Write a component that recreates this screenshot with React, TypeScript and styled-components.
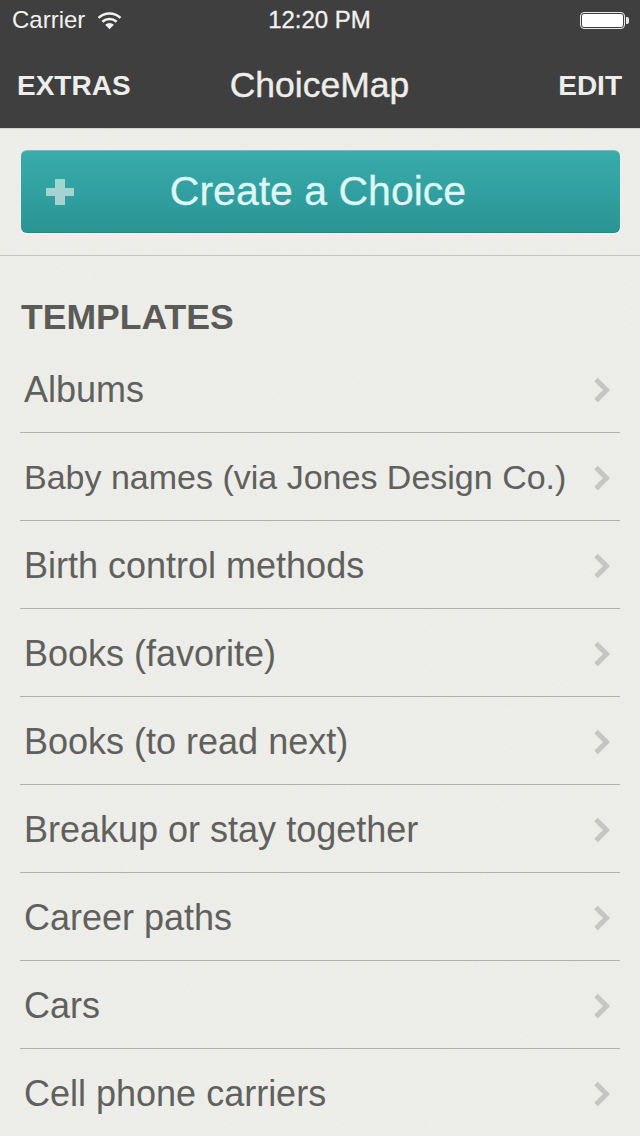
import styled, { createGlobalStyle } from "styled-components";

const GlobalStyle = createGlobalStyle`
  html, body {
    margin: 0;
    padding: 0;
    background: #eeeeea;
  }
  body {
    font-family: "Liberation Sans", Arial, sans-serif;
  }
`

const Screen = styled.div`
  position: relative;
  width: 640px;
  height: 1136px;
  overflow: hidden;
  background: #eeeeea;
`

const Grain = styled.svg`
  position: absolute;
  inset: 0;
  width: 640px;
  height: 1136px;
  opacity: 0.1;
  pointer-events: none;
`

const Header = styled.header`
  position: relative;
  height: 129px;
  background: #3f3f3f;
  color: #ededea;
  display: flex;
  flex-direction: column;
  border-bottom: 1px solid #d3d3ce;
  box-sizing: border-box;
`

const StatusBar = styled.div`
  height: 40px;
  padding: 0 13px 0 12px;
  display: grid;
  grid-template-columns: 1fr auto 1fr;
  align-items: center;
  font-size: 24px;
  color: #f2f2f0;
`

const Carrier = styled.div`
  display: flex;
  align-items: center;
  gap: 12px;
`

const Time = styled.div`
  font-weight: 500;
  -webkit-text-stroke: 0.3px #f2f2f0;
`

const Battery = styled.div`
  justify-self: end;
  display: flex;
  align-items: center;
  margin-right: -2px;
`

const BatteryBody = styled.div`
  width: 41px;
  height: 13px;
  background: #fff;
  border: 1px solid #3f3f3f;
  outline: 1px solid #e8e8e8;
  border-radius: 3px;
`

const BatteryTip = styled.div`
  width: 3px;
  height: 7px;
  margin-left: 2px;
  background: #e8e8e8;
  border-radius: 0 2px 2px 0;
`

const NavBar = styled.nav`
  flex: 1;
  display: flex;
  align-items: center;
  justify-content: space-between;
  padding: 0 18px 0 17px;
  margin-top: 3px;
`

const NavAction = styled.div`
  font-size: 28px;
  font-weight: 700;
  width: 140px;
  padding-top: 1px;
  text-align: ${(p: { $end?: boolean }) => (p.$end ? "right" : "left")};
`

const NavTitle = styled.div`
  font-size: 35.5px;
  -webkit-text-stroke: 0.4px #ededea;
`

const Content = styled.main`
  position: relative;
`

const CreateArea = styled.div`
  height: 127px;
  box-sizing: border-box;
  padding: 21px 20px 0 21px;
  border-bottom: 1px solid #c4c4bf;
`

const CreateButton = styled.div`
  position: relative;
  height: 83px;
  box-sizing: border-box;
  padding-right: 5px;
  border-radius: 6px;
  background: linear-gradient(#38abaa, #2b9596);
  border-top: 1px solid #76bdbb;
  border-bottom: 1px solid #2a8485;
  box-shadow: 0 1px 0 #f7f7f4;
  display: flex;
  align-items: center;
  justify-content: center;
  font-size: 41px;
  color: #def6f4;
  -webkit-text-stroke: 0.3px #def6f4;
`

const PlusIcon = styled.svg`
  position: absolute;
  left: 25px;
  top: 28px;
  width: 28px;
  height: 26px;
`

const Templates = styled.section`
  padding: 0 20px;
`

const SectionTitle = styled.h2`
  margin: 0;
  padding-top: 41px;
  height: 49px;
  line-height: 40px;
  font-size: 35.6px;
  font-weight: 700;
  color: #5a5a57;
  padding-left: 1px;
`

const Row = styled.div<{ $first?: boolean; $small?: boolean }>`
  height: 88px;
  box-sizing: border-box;
  padding: 2px 9px 0 4px;
  margin-top: ${(p) => (p.$first ? "-1px" : "0")};
  display: flex;
  align-items: center;
  justify-content: space-between;
  border-bottom: 1px solid #b1b1ac;
  font-size: ${(p) => (p.$small ? "34px" : "36px")};
  color: #60605d;
`

const Chevron = styled.svg`
  width: 18px;
  height: 28px;
  margin-top: 1px;
  flex: none;
`

const items = [
  "Albums",
  "Baby names (via Jones Design Co.)",
  "Birth control methods",
  "Books (favorite)",
  "Books (to read next)",
  "Breakup or stay together",
  "Career paths",
  "Cars",
  "Cell phone carriers",
]

function App() {
  return (
    <Screen>
      <GlobalStyle />
      <Grain aria-hidden="true">
        <filter id="grain">
          <feTurbulence type="fractalNoise" baseFrequency="0.7" numOctaves="3" seed="4" />
          <feColorMatrix values="0 0 0 0 0.45  0 0 0 0 0.45  0 0 0 0 0.42  0.9 0 0 0 -0.2" />
        </filter>
        <rect width="640" height="1136" filter="url(#grain)" />
      </Grain>
      <Header>
        <StatusBar>
          <Carrier>
            Carrier
            <svg width="25" height="19" viewBox="0 0 24 18">
              <path d="M1.5 6.5a15 15 0 0 1 21 0" fill="none" stroke="#f2f2f0" strokeWidth="2.4" />
              <path d="M5.2 10.2a10 10 0 0 1 13.6 0" fill="none" stroke="#f2f2f0" strokeWidth="2.4" />
              <path d="M12 17.5l-4.2-4.4a6 6 0 0 1 8.4 0z" fill="#f2f2f0" />
            </svg>
          </Carrier>
          <Time>12:20 PM</Time>
          <Battery>
            <BatteryBody />
            <BatteryTip />
          </Battery>
        </StatusBar>
        <NavBar>
          <NavAction>EXTRAS</NavAction>
          <NavTitle>ChoiceMap</NavTitle>
          <NavAction $end>EDIT</NavAction>
        </NavBar>
      </Header>
      <Content>
        <CreateArea>
          <CreateButton>
            <PlusIcon viewBox="0 0 28 26">
              <path d="M9 0h10v9h9v8h-9v9H9v-9H0V9h9z" fill="#a3d4d2" />
            </PlusIcon>
            Create a Choice
          </CreateButton>
        </CreateArea>
        <Templates>
          <SectionTitle>TEMPLATES</SectionTitle>
          {items.map((item, key) => (
            <Row key={key} $first={key === 0} $small={key === 1}>
              {item}
              <Chevron viewBox="0 0 18 28">
                <path d="M3 3.500l10.500 10.500L3 24.500" fill="none" stroke="#c5c5c3" strokeWidth="5" />
              </Chevron>
            </Row>
          ))}
        </Templates>
      </Content>
    </Screen>
  )
}

export default App
